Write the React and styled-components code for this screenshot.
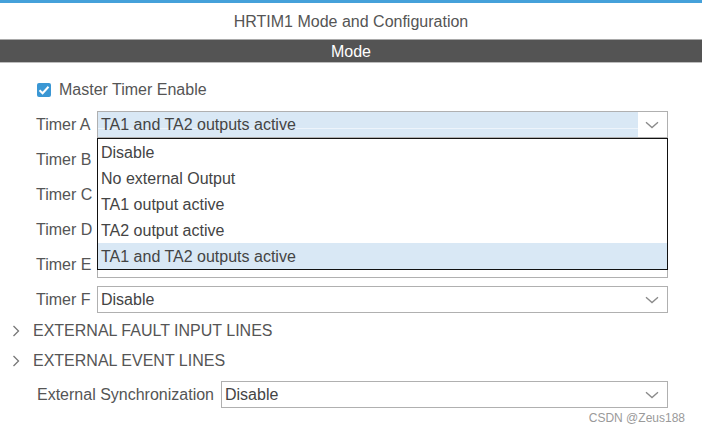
import React from "react";
import styled, { createGlobalStyle } from "styled-components";

const GlobalStyle = createGlobalStyle`
  html, body {
    margin: 0;
    padding: 0;
    background: #fff;
  }
  body {
    font-family: "Liberation Sans", Arial, sans-serif;
  }
`;

const timers = ["A", "B", "C", "D", "E", "F"];
const options = [
  "Disable",
  "No external Output",
  "TA1 output active",
  "TA2 output active",
  "TA1 and TA2 outputs active",
];

const Chevron = () => (
  <svg width="14" height="8" viewBox="0 0 14 8">
    <path d="M1 1.2 L7 6.6 L13 1.2" fill="none" stroke="#8a8a8a" strokeWidth="1.3" />
  </svg>
);

const RightArrow = () => (
  <svg width="8" height="12" viewBox="0 0 8 12">
    <path d="M1.5 1 L6.5 6 L1.5 11" fill="none" stroke="#777" strokeWidth="1.3" />
  </svg>
);

const Select = ({ value, active, children }) => (
  <SelectBox>
    <SelectValue active={active}>{value}</SelectValue>
    <ArrowCell>
      <Chevron />
    </ArrowCell>
    {children}
  </SelectBox>
);

const App = () => {
  return (
    <>
      <GlobalStyle />
      <Page>
        <TitleBar>HRTIM1 Mode and Configuration</TitleBar>
        <ModeBar>Mode</ModeBar>
        <Body>
          <CheckRow>
            <CheckBox>
              <svg width="12" height="10" viewBox="0 0 12 10">
                <path d="M1.5 5.2 L4.6 8.2 L10.5 1.8" fill="none" stroke="#fff" strokeWidth="2" />
              </svg>
            </CheckBox>
            Master Timer Enable
          </CheckRow>
          <TimerGrid>
            {timers.map((t) => (
              <React.Fragment key={t}>
                <Label>Timer {t}</Label>
                {t === "A" ? (
                  <Select value="TA1 and TA2 outputs active" active>
                    <DropList>
                      {options.map((o, i) => (
                        <DropItem key={o} selected={i === options.length - 1}>
                          {o}
                        </DropItem>
                      ))}
                    </DropList>
                  </Select>
                ) : (
                  <Select value="Disable" />
                )}
              </React.Fragment>
            ))}
          </TimerGrid>
          <Expanders>
            <ExpanderRow>
              <RightArrow />
              EXTERNAL FAULT INPUT LINES
            </ExpanderRow>
            <ExpanderRow>
              <RightArrow />
              EXTERNAL EVENT LINES
            </ExpanderRow>
          </Expanders>
          <SyncRow>
            <Label>External Synchronization</Label>
            <Select value="Disable" />
          </SyncRow>
        </Body>
        <Watermark>CSDN @Zeus188</Watermark>
      </Page>
    </>
  );
};

const Page = styled.div`
  position: relative;
  width: 702px;
  height: 435px;
  overflow: hidden;
  background: #fff;
  color: #555;
  font-size: 16px;
`;

const TitleBar = styled.div`
  border-top: 3px solid #45a1da;
  height: 40px;
  box-sizing: border-box;
  border-bottom: 1px solid #a9a9a9;
  display: flex;
  align-items: center;
  justify-content: center;
  color: #555;
  padding-top: 1px;
`;

const ModeBar = styled.div`
  height: 23px;
  box-sizing: border-box;
  background: #545454;
  border-bottom: 1px solid #bdbdbd;
  color: #fff;
  display: flex;
  align-items: center;
  justify-content: center;
  padding-top: 1px;
`;

const Body = styled.div`
  padding: 18px 34px 0 0;
  display: flex;
  flex-direction: column;
`;

const CheckRow = styled.div`
  display: flex;
  align-items: center;
  gap: 8px;
  height: 18px;
  margin-left: 37px;
`;

const CheckBox = styled.span`
  width: 14px;
  height: 14px;
  border-radius: 2px;
  background: #3a97d4;
  display: flex;
  align-items: center;
  justify-content: center;
`;

const TimerGrid = styled.div`
  margin-top: 12px;
  margin-left: 36px;
  display: grid;
  grid-template-columns: 56px 1fr;
  column-gap: 5px;
  row-gap: 8px;
  align-items: center;
`;

const Label = styled.span`
  white-space: nowrap;
  color: #555;
`;

const SelectBox = styled.div`
  position: relative;
  height: 27px;
  box-sizing: border-box;
  border: 1px solid #b0b0b0;
  display: flex;
  background: #fff;
  flex: 1;
`;

const SelectValue = styled.div`
  flex: 1;
  padding-left: 3px;
  display: flex;
  align-items: center;
  color: #444;
  background: ${(p) =>
    p.active
      ? "linear-gradient(#d9e8f5 0 16px, #edf4fb 16px 17px, #d9e8f5 17px)"
      : "#fff"};
`;

const ArrowCell = styled.div`
  width: 27px;
  display: flex;
  align-items: center;
  justify-content: center;
  padding-right: 2px;
`;

const DropList = styled.div`
  position: absolute;
  top: 26px;
  left: -1px;
  right: -1px;
  z-index: 5;
  background: #fff;
  border: 1px solid #111;
  display: flex;
  flex-direction: column;
`;

const DropItem = styled.div`
  height: 26px;
  display: flex;
  align-items: center;
  padding-left: 3px;
  padding-top: 1px;
  box-sizing: border-box;
  color: #444;
  background: ${(p) => (p.selected ? "#d9e8f5" : "#fff")};
`;

const Expanders = styled.div`
  margin-top: 3px;
  display: flex;
  flex-direction: column;
`;

const ExpanderRow = styled.div`
  height: 30px;
  display: flex;
  align-items: center;
  gap: 13px;
  padding-left: 12px;
  color: #555;
`;

const SyncRow = styled.div`
  margin-top: 5px;
  margin-left: 37px;
  display: flex;
  align-items: center;
  gap: 7px;
`;

const Watermark = styled.div`
  position: absolute;
  right: 17px;
  bottom: 10px;
  font-size: 12px;
  color: #9a9a9a;
`;

export default App;
